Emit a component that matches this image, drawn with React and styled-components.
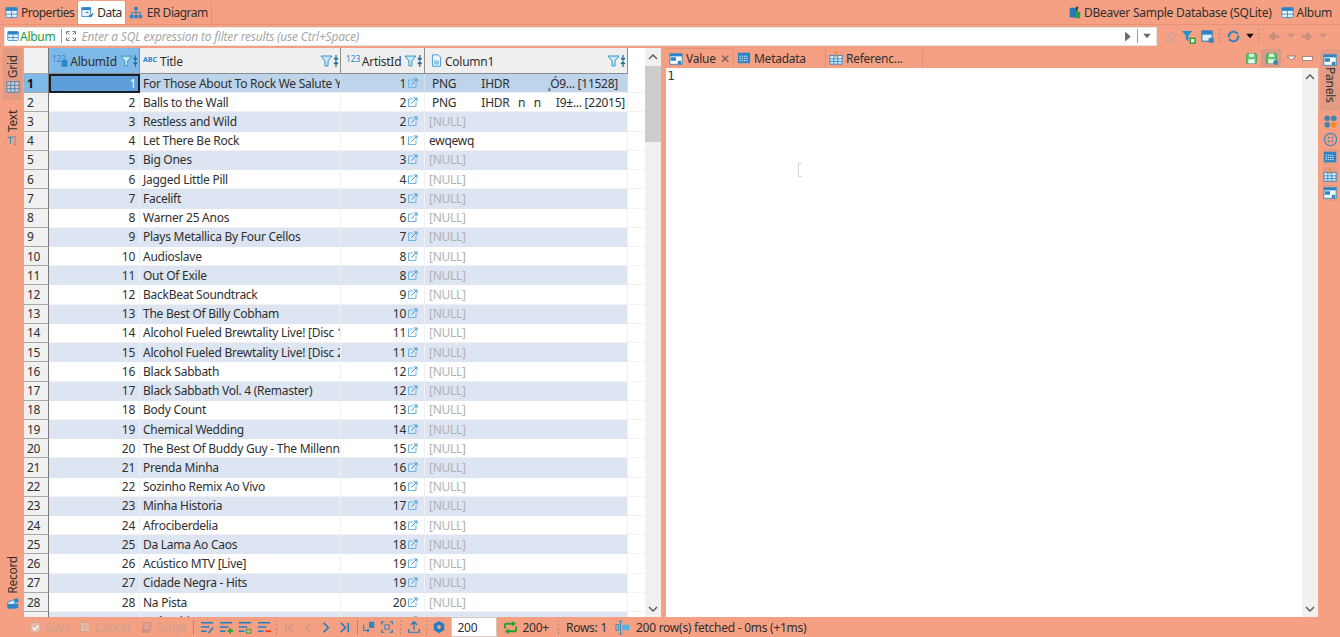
import styled, { createGlobalStyle } from "styled-components";

const Global = createGlobalStyle`
  html, body { margin: 0; padding: 0; background: #f6a083; overflow: hidden; }
  * { box-sizing: border-box; }
`;

const ORANGE = "#f6a083";
const TEXT = "#2f2f2f";

const Shell = styled.div`
  width: 1340px;
  height: 637px;
  background: ${ORANGE};
  display: flex;
  flex-direction: column;
  overflow: hidden;
  font-family: "Noto Sans", "Open Sans", sans-serif;
  font-size: 12px;
  letter-spacing: -0.26px;
  color: ${TEXT};
`;

/* top tabs */
const TopBar = styled.div`
  height: 25px;
  padding: 1px 8px 0 3px;
  display: flex;
  align-items: stretch;
  border-bottom: 1px solid #e3937a;
`;
const TopTab = styled.div`
  display: flex;
  align-items: center;
  gap: ${(p) => p.$gap || 3}px;
  padding: 0 3px 0 ${(p) => p.$left || 3}px;
  border-right: 1px solid #dc9278;
  letter-spacing: -0.5px;
  background: ${(p) => (p.$active ? "#fff" : "transparent")};
  border-radius: 2px 2px 0 0;
`;
const TopRight = styled.div`
  margin-left: auto;
  display: flex;
  align-items: center;
  gap: 3px;
`;
const ContextLabel = styled.span`
  margin-right: 6px;
`;

/* filter row */
const FilterRow = styled.div`
  height: 21px;
  padding: 1px 0 0 4px;
  display: flex;
  align-items: center;
`;
const FilterInput = styled.div`
  width: 1153px;
  height: 19px;
  background: #fff;
  display: flex;
  align-items: center;
  padding-left: 2px;
  border: 1px solid #e9e4e0;
`;
const TableName = styled.span`
  color: #1a9a3c;
  margin: 0 5px 0 1px;
`;
const VLine = styled.span`
  width: 1px;
  height: 14px;
  flex: none;
  background: ${(p) => p.$c || "#9a9a9a"};
  margin: ${(p) => p.$margin || "0 3px"};
`;
const Placeholder = styled.span`
  font-style: italic;
  color: #a7a7a7;
  margin-left: 4px;
  letter-spacing: -0.2px;
`;
const FilterEnd = styled.div`
  margin-left: auto;
  display: flex;
  align-items: center;
  padding-right: 3px;
`;
const FilterTools = styled.div`
  display: flex;
  align-items: center;
  margin-left: 6px;
`;
const Slot = styled.span`
  width: ${(p) => p.$w || 18}px;
  height: 18px;
  display: flex;
  align-items: center;
  justify-content: center;
  flex: none;
`;
const Dots = styled.span`
  width: 1px;
  height: 14px;
  margin: 0 ${(p) => p.$m || 5}px 0 ${(p) => p.$ml || p.$m || 5}px;
  flex: none;
  background: repeating-linear-gradient(#b98a78 0 2px, transparent 2px 4px);
`;

/* main area */
const Main = styled.div`
  flex: 1;
  min-height: 0;
  display: flex;
`;
const LeftRail = styled.div`
  width: 24px;
  flex: none;
  padding: 2px 2px 0 3px;
  display: flex;
  flex-direction: column;
`;
const SideTab = styled.div`
  display: flex;
  flex-direction: column;
  align-items: center;
  gap: 2px;
  height: ${(p) => p.$h}px;
  padding-top: ${(p) => p.$top || 0}px;
  background: ${(p) => (p.$active ? "#e39c84" : "transparent")};
  border: ${(p) => (p.$active ? "1px solid #dd9880" : "0")};
  border-radius: 2px;
  margin-top: ${(p) => (p.$end ? "auto" : "0")};
`;
const VerticalUp = styled.span`
  writing-mode: vertical-rl;
  transform: rotate(180deg);
  line-height: 16px;
`;
const VerticalDown = styled.span`
  writing-mode: vertical-rl;
  line-height: 16px;
`;

const GridPane = styled.div`
  width: 621px;
  flex: none;
  margin-top: 2px;
  background: #fff;
  display: flex;
  flex-direction: column;
  overflow: hidden;
`;
const Row = styled.div`
  height: ${(p) => (p.$head ? "26px" : "19.22px")};
  flex: none;
  display: flex;
`;
const Head = styled.div`
  width: ${(p) => p.$w}px;
  flex: none;
  display: flex;
  align-items: center;
  padding: 0 1px 0 ${(p) => p.$left || 3}px;
  gap: 2px;
  background: ${(p) => (p.$sel ? "#7fb9e9" : "#efefef")};
  border-right: 1px solid #8d8d8d;
  border-bottom: 1px solid #8d8d8d;
`;
const HeadName = styled.span`
  flex: 1;
  padding-top: 1px;
`;
const RowNum = styled.div`
  width: 25px;
  flex: none;
  display: flex;
  align-items: center;
  padding-left: 3px;
  background: ${(p) => (p.$sel ? "#7fb9e9" : "#f0f0f0")};
  font-weight: ${(p) => (p.$sel ? 700 : 400)};
  color: ${(p) => (p.$sel ? "#111" : TEXT)};
  border-right: 1px solid #777;
  border-bottom: 1px solid #a8a8a8;
`;
const Cell = styled.div`
  width: ${(p) => p.$w}px;
  flex: none;
  display: flex;
  align-items: center;
  justify-content: ${(p) => (p.$num ? "flex-end" : "flex-start")};
  padding: 0 ${(p) => p.$right || 0}px 0 ${(p) => p.$left || 3}px;
  overflow: hidden;
  white-space: pre;
  background: ${(p) => (p.$sel ? "#bdd4ea" : p.$alt ? "#dce5f1" : "#fff")};
  border-right: 1px solid ${(p) => (p.$sel ? "#cfe0f0" : "#eef1f5")};
  border-bottom: 1px solid ${(p) => (p.$alt ? "#dce5f1" : "#f1f1f1")};
`;
const FocusCell = styled(Cell)`
  background: #5f9fd9;
  color: #f3f8fc;
  border: 2px solid #16202c;
  padding-right: 2px;
`;
const LinkGap = styled.span`
  display: flex;
  margin-left: 1px;
`;
const Null = styled.span`
  color: #b2b2b2;
`;
const Blob = styled.span`
  display: flex;
  width: 100%;
  padding-left: 3px;
`;
const BlobTail = styled.span`
  margin-left: auto;
  margin-right: ${(p) => p.$right}px;
`;
const BlobMark = styled.span`
  width: ${(p) => p.$w}px;
  flex: none;
`;
const Filler = styled.div`
  flex: 1;
  border-bottom: 1px solid #f3f3f3;
`;

const ScrollBar = styled.div`
  width: 16px;
  flex: none;
  background: #f0f0f0;
  display: flex;
  flex-direction: column;
  align-items: center;
  justify-content: space-between;
  position: relative;
`;
const GridScroll = styled(ScrollBar)`
  margin-top: 2px;
`;
const Thumb = styled.div`
  position: absolute;
  top: 18px;
  left: 0;
  right: 0;
  height: 76px;
  background: #cdcdcd;
`;
const ScrollArrow = styled.span`
  height: 17px;
  display: flex;
  align-items: center;
  justify-content: center;
`;

const ValuePane = styled.div`
  width: 652px;
  flex: none;
  margin-left: 5px;
  display: flex;
  flex-direction: column;
`;
const ValueTabs = styled.div`
  height: 22px;
  padding-top: 2px;
  display: flex;
  align-items: stretch;
`;
const ValueTab = styled.div`
  width: ${(p) => p.$w}px;
  display: flex;
  align-items: center;
  gap: 3px;
  padding-left: 3px;
  border-right: 1px solid #dc9278;
  border-top: ${(p) => (p.$active ? "1px solid #e3937a" : "0")};
  border-radius: 3px 3px 0 0;
`;
const CloseMark = styled.span`
  margin-left: auto;
  margin-right: 3px;
  color: #6b5a53;
`;
const ValueTools = styled.div`
  margin-left: auto;
  display: flex;
  align-items: center;
  padding-right: 5px;
`;
const SaveSlot = styled(Slot)`
  background: ${(p) => (p.$on ? "#d89a88" : "transparent")};
  width: 20px;
`;
const ValueBody = styled.div`
  flex: 1;
  min-height: 0;
  background: #fff;
  display: flex;
  position: relative;
`;
const ValueText = styled.div`
  flex: 1;
  padding: 0 0 0 1px;
  font-family: "DejaVu Sans Mono", "Liberation Mono", monospace;
  font-size: 13px;
  line-height: 16px;
  letter-spacing: 0;
  color: #33424a;
`;
const MouseCaret = styled.span`
  position: absolute;
  left: 132px;
  top: 95px;
  width: 4px;
  height: 14px;
  border: 1px solid #d4d4d4;
  border-right: 0;
`;

const RightRail = styled.div`
  width: 22px;
  flex: none;
  padding: 3px 0 0 2px;
  display: flex;
  flex-direction: column;
  align-items: center;
  gap: 2px;
`;
const PanelsTab = styled.div`
  width: 20px;
  height: 62px;
  padding-top: 4px;
  background: #e39c84;
  border-radius: 2px;
  display: flex;
  flex-direction: column;
  align-items: center;
`;
const RailIcon = styled.span`
  width: 15px;
  height: 16px;
  flex: none;
  display: flex;
  align-items: center;
  justify-content: center;
  background: ${(p) => (p.$on ? "#e39c84" : "transparent")};
`;

/* bottom bar */
const BottomBar = styled.div`
  height: 20px;
  flex: none;
  display: flex;
  align-items: center;
  padding-left: 29px;
`;
const Action = styled.span`
  display: flex;
  align-items: center;
  gap: 3px;
  color: #cda18f;
  margin-right: ${(p) => p.$mr}px;
`;
const PageInput = styled.div`
  width: 46px;
  height: 20px;
  flex: none;
  background: #fff;
  border: 1px solid #d8c7bf;
  display: flex;
  align-items: center;
  padding-left: 6px;
  margin: 0 5px 0 3px;
`;
const Status = styled.span`
  display: flex;
  margin-left: ${(p) => p.$ml || 0}px;
`;

/* icons */
const Svg = ({ s = 13, children }) => (
  <svg width={s} height={s} viewBox="0 0 16 16" fill="none">
    {children}
  </svg>
);
const TableIcon = ({ s = 13 }) => (
  <Svg s={s}>
    <rect x="1" y="2" width="14" height="12" rx="1" fill="#e9f3fb" stroke="#2a86c8" />
    <rect x="1" y="2" width="14" height="4" fill="#2a86c8" />
    <path d="M8 6v8M1 10h14" stroke="#2a86c8" />
  </Svg>
);
const DataIcon = () => (
  <Svg>
    <rect x="1" y="2" width="11" height="11" fill="#e9f3fb" stroke="#2a86c8" />
    <rect x="1" y="2" width="11" height="3" fill="#2a86c8" />
    <path d="M10 11l2 2 3-4M6 8h3" stroke="#1d6fa8" strokeWidth="1.5" />
  </Svg>
);
const ErIcon = () => (
  <Svg s={14}>
    <rect x="6" y="1" width="4" height="4" fill="#2a86c8" />
    <rect x="1" y="10" width="4" height="4" fill="#2a86c8" />
    <rect x="6" y="10" width="4" height="4" fill="#2a86c8" />
    <rect x="11" y="10" width="4" height="4" fill="#2a86c8" />
    <path d="M8 5v5M3 10V7.5h10V10" stroke="#2a86c8" />
  </Svg>
);
const ExpandIcon = () => (
  <Svg s={12}>
    <path d="M2 6V2h4M14 6V2h-4M2 10v4h4M14 10v4h-4M3 3l3 3M13 3l-3 3M3 13l3-3M13 13l-3-3" stroke="#555" />
  </Svg>
);
const Arrow = ({ dir = "down", c = "#555" }) => {
  const pts = {
    down: "3,5 13,5 8,11",
    right: "5,2 12,8 5,14",
  };
  return (
    <Svg s={dir === "right" ? 13 : 12}>
      <polygon points={pts[dir]} fill={c} />
    </Svg>
  );
};
const Eraser = () => (
  <Svg s={15}>
    <path d="M2 10l6-7 5 4-6 7H4z" fill="#e0a592" stroke="#cf9f8d" />
    <path d="M9 14h5" stroke="#cf9f8d" />
  </Svg>
);
const FunnelPlus = () => (
  <Svg s={15}>
    <path d="M1 2h11L8 7v6L5 11V7z" fill="#1c94c9" />
    <rect x="10" y="10" width="5" height="5" fill="#fff" stroke="#2a9a3a" strokeWidth="1.5" />
  </Svg>
);
const SaveFilter = () => (
  <Svg s={15}>
    <rect x="2" y="2" width="11" height="11" fill="#dcecf8" stroke="#2a6fa8" />
    <rect x="2" y="2" width="11" height="4" fill="#2a86c8" />
    <circle cx="12" cy="12" r="3" fill="#3d86b8" />
  </Svg>
);
const RefreshBlue = () => (
  <Svg s={15}>
    <path d="M3 9a5 5 0 0 1 8-5l2 1M13 7a5 5 0 0 1-8 5L3 11" stroke="#2a7fc0" strokeWidth="2" />
  </Svg>
);
const Side = ({ flip }) => (
  <Svg s={15}>
    <path
      d={flip ? "M2 8h8M7 4l4 4-4 4" : "M14 8H6M9 4L5 8l4 4"}
      stroke="#c98f7c"
      strokeWidth="3"
    />
  </Svg>
);
const TinyFunnel = () => (
  <svg width="20" height="14" viewBox="0 0 20 14" fill="none">
    <path d="M2 2h11L9 7v5H6V7z" fill="#cfe6f4" stroke="#2b97c9" />
    <path d="M17 1v5M15 4l2 2 2-2" stroke="#2a6d96" strokeWidth="1.3" />
    <path d="M17 13V8M15 10l2-2 2 2" stroke="#2a6d96" strokeWidth="1.3" />
  </svg>
);
const TypeNum = ({ overlay }) => (
  <svg width={overlay ? 17 : 14} height="14" viewBox={overlay ? "0 0 17 14" : "0 0 14 14"}>
    <text x="0" y="8" fontSize="8.5" letterSpacing="0" fontFamily="Noto Sans, sans-serif" fill="#2a86c8">123</text>
    {overlay && <rect x="10" y="6" width="6" height="7" fill="#2a86c8" />}
  </svg>
);
const TypeAbc = () => (
  <svg width="15" height="12" viewBox="0 0 15 12">
    <text x="0" y="7" fontSize="7" fontWeight="700" letterSpacing="0" fontFamily="Noto Sans, sans-serif" fill="#2a86c8">ABC</text>
  </svg>
);
const DocIcon = () => (
  <Svg>
    <path d="M3 1h7l3 3v11H3z" fill="#eef6fb" stroke="#2a86c8" />
    <path d="M5 8h6v5H5z" fill="#8cc3e6" />
  </Svg>
);
const LinkIcon = () => (
  <svg width="11" height="11" viewBox="0 0 11 11" fill="none">
    <path d="M6 2H1.5v7.5H9V5" stroke="#6bb5e2" />
    <path d="M4.5 6.5L9.5 1.5M6.8 1h3.2v3.2" stroke="#3a94d0" />
  </svg>
);
const SaveGreen = ({ dot }) => (
  <Svg>
    <rect x="2" y="2" width="12" height="12" rx="1" fill="#5fc97a" stroke="#2e9a4c" />
    <rect x="5" y="2" width="6" height="4" fill="#dff5e5" />
    <rect x="4" y="9" width="8" height="5" fill="#e9f8ed" />
    {dot && <circle cx="13" cy="13" r="3" fill="#3d86b8" />}
  </Svg>
);
const Minimize = () => (
  <svg width="11" height="5" viewBox="0 0 11 5">
    <rect x="0.5" y="0.5" width="10" height="4" fill="#fff" stroke="#a98a7e" />
  </svg>
);
const ViewMenu = () => (
  <svg width="11" height="6" viewBox="0 0 11 6">
    <path d="M1 1h9L5.5 5z" fill="#fff" stroke="#9a7a6e" />
  </svg>
);
const DbIcon = () => (
  <Svg>
    <rect x="2" y="2" width="10" height="12" rx="1" fill="#2f78b8" />
    <rect x="9" y="7" width="6" height="8" fill="#27a04a" />
    <path d="M10 1l3 0-3 6z" fill="#233" />
  </Svg>
);
const SmallGrid = () => (
  <Svg s={14}>
    <rect x="1" y="2" width="14" height="12" fill="#f2c1ad" stroke="#2a86c8" />
    <path d="M5.5 2v12M10 2v12M1 6h14M1 10h14" stroke="#2a86c8" />
  </Svg>
);
const TextGlyph = () => (
  <Svg s={13}>
    <path d="M2 4h7M5.5 4v8" stroke="#2a86c8" strokeWidth="1.4" />
    <path d="M11 3v10M9.5 3h3M9.5 13h3" stroke="#888" />
  </Svg>
);
const RecordGlyph = () => (
  <Svg s={14}>
    <path d="M2 7l8-3v10H2z" fill="#dff0fa" stroke="#2a86c8" />
    <rect x="2" y="9" width="12" height="5" fill="#2a86c8" />
    <circle cx="12" cy="5" r="2.5" fill="#2a86c8" />
  </Svg>
);
const ValueIcon = () => (
  <Svg s={14}>
    <rect x="1" y="2" width="14" height="12" fill="#fff" stroke="#2a86c8" />
    <rect x="1" y="2" width="14" height="3" fill="#2a86c8" />
    <rect x="2" y="6" width="6" height="4" fill="#2a86c8" />
    <rect x="10" y="10" width="4" height="4" fill="#3d86b8" />
  </Svg>
);
const MetaIcon = () => (
  <Svg s={14}>
    <rect x="1" y="2" width="14" height="12" fill="#2a86c8" />
    <path d="M3 6h10M3 8.5h10M3 11h10" stroke="#fff" strokeDasharray="1.5 1" />
  </Svg>
);
const RefIcon = () => (
  <Svg s={14}>
    <rect x="1" y="5" width="14" height="10" fill="#dcecf8" stroke="#2a86c8" />
    <path d="M5.5 5v10M10 5v10M1 9h14M1 12h14" stroke="#2a86c8" />
    <path d="M8 0v7" stroke="#ef8a1f" strokeWidth="1.6" />
  </Svg>
);
const FourDots = () => (
  <Svg s={15}>
    <circle cx="4.5" cy="4.5" r="3" fill="#3d86b8" />
    <circle cx="11.5" cy="4.5" r="3" fill="#3d86b8" />
    <circle cx="4.5" cy="11.5" r="3" fill="#3d86b8" />
    <circle cx="11.5" cy="11.5" r="3" fill="#ef8a1f" />
  </Svg>
);
const RoundDots = () => (
  <Svg s={15}>
    <circle cx="8" cy="8" r="6.5" stroke="#3d86b8" strokeWidth="1.3" />
    <path d="M5.5 5.5h1v1h-1zM9.5 5.5h1v1h-1zM5.5 9.5h1v1h-1zM9.5 9.5h1v1h-1z" fill="#3d86b8" stroke="#3d86b8" />
  </Svg>
);
const SaveCheck = () => (
  <Svg s={13}>
    <circle cx="8" cy="8" r="6.5" fill="#e6bcab" stroke="#c9a493" />
    <path d="M4.5 8l2.5 2.5L11.5 6" stroke="#fff" strokeWidth="1.6" />
  </Svg>
);
const CancelBox = () => (
  <Svg s={12}>
    <rect x="2" y="2" width="12" height="12" fill="#eab9a6" stroke="#c9a493" />
    <path d="M5 5l6 6M11 5l-6 6" stroke="#c9a493" />
  </Svg>
);
const ScriptIcon = () => (
  <Svg s={13}>
    <path d="M4 2h9v10H4zM2 12h9v2H2z" fill="#d69c89" stroke="#c9917f" />
    <path d="M6 5h5M6 8h5" stroke="#eec0ae" />
  </Svg>
);
const Lines = ({ mark }) => (
  <Svg s={15}>
    <path d="M1 3h13M1 7.5h9M1 12h6" stroke="#1f7fc2" strokeWidth="1.6" />
    {mark === "edit" && <path d="M9 14l5-6" stroke="#1f7fc2" strokeWidth="1.6" />}
    {mark === "add" && <path d="M9 11.5h6M12 8.5v6" stroke="#21a03a" strokeWidth="1.8" />}
    {mark === "dup" && <path d="M9 10h5v4H9z" stroke="#21a03a" />}
    {mark === "del" && <path d="M9 12h6" stroke="#e2402c" strokeWidth="1.8" />}
  </Svg>
);
const Pager = ({ d, bar, c }) => (
  <Svg s={15}>
    <path d={d} stroke={c} strokeWidth="1.7" />
    {bar && <path d={bar} stroke={c} strokeWidth="1.7" />}
  </Svg>
);
const LinkedCols = () => (
  <Svg s={14}>
    <path d="M2 5v7h6M6 10l2 2-2 2" stroke="#1f7fc2" strokeWidth="1.2" />
    <rect x="8" y="2" width="6" height="7" fill="#2a86c8" />
  </Svg>
);
const Focus = () => (
  <Svg s={14}>
    <path d="M2 5V2h3M11 2h3v3M2 11v3h3M14 11v3h-3" stroke="#1f7fc2" strokeWidth="1.4" />
    <rect x="5.5" y="5.5" width="5" height="5" stroke="#1f7fc2" />
  </Svg>
);
const Upload = () => (
  <Svg s={14}>
    <path d="M2 10v4h12v-4" stroke="#1f7fc2" strokeWidth="1.4" />
    <path d="M8 11V2M4.5 5.5L8 2l3.5 3.5" stroke="#1f7fc2" strokeWidth="1.6" />
  </Svg>
);
const Gear = () => (
  <Svg s={14}>
    <polygon points="8,1 14,4.5 14,11.5 8,15 2,11.5 2,4.5" fill="#1f7fc2" />
    <circle cx="8" cy="8" r="2.2" fill="#f6a083" />
  </Svg>
);
const GreenLoop = () => (
  <Svg s={15}>
    <path d="M2 9V6a2 2 0 0 1 2-2h8M14 7v3a2 2 0 0 1-2 2H4" stroke="#1ea02f" strokeWidth="2" />
    <path d="M10 1l4 3-4 3zM6 9l-4 3 4 3z" fill="#1ea02f" />
  </Svg>
);
const FetchIcon = () => (
  <Svg s={15}>
    <path d="M4 1h4M4 15h4M6 1v14" stroke="#1f8fc9" />
    <rect x="8" y="5" width="7" height="6" fill="#4db3e2" />
    <rect x="1" y="5" width="3" height="6" stroke="#1f8fc9" />
  </Svg>
);
const Chevron = ({ up }) => (
  <svg width="10" height="6" viewBox="0 0 10 6" fill="none">
    <path d={up ? "M1 5l4-4 4 4" : "M1 1l4 4 4-4"} stroke="#606060" strokeWidth="1.5" />
  </svg>
);

const COLS = { album: 91, title: 201, artist: 84, col: 203 };

const ALBUMS = [
  ["For Those About To Rock We Salute You", 1],
  ["Balls to the Wall", 2],
  ["Restless and Wild", 2],
  ["Let There Be Rock", 1],
  ["Big Ones", 3],
  ["Jagged Little Pill", 4],
  ["Facelift", 5],
  ["Warner 25 Anos", 6],
  ["Plays Metallica By Four Cellos", 7],
  ["Audioslave", 8],
  ["Out Of Exile", 8],
  ["BackBeat Soundtrack", 9],
  ["The Best Of Billy Cobham", 10],
  ["Alcohol Fueled Brewtality Live! [Disc 1]", 11],
  ["Alcohol Fueled Brewtality Live! [Disc 2]", 11],
  ["Black Sabbath", 12],
  ["Black Sabbath Vol. 4 (Remaster)", 12],
  ["Body Count", 13],
  ["Chemical Wedding", 14],
  ["The Best Of Buddy Guy - The Millennium", 15],
  ["Prenda Minha", 16],
  ["Sozinho Remix Ao Vivo", 16],
  ["Minha Historia", 17],
  ["Afrociberdelia", 18],
  ["Da Lama Ao Caos", 18],
  ["Acústico MTV [Live]", 19],
  ["Cidade Negra - Hits", 19],
  ["Na Pista", 20],
  ["Axé Bahia 2001", 21],
];

const column1 = (i) => {
  if (i === 0)
    return (
      <Blob>
        PNG<BlobMark $w={25} />IHDR<BlobTail $right={9}>¸Ó9... [11528]</BlobTail>
      </Blob>
    );
  if (i === 1)
    return (
      <Blob>
        PNG<BlobMark $w={25} />IHDR   n   n<BlobTail $right={2}>I9±... [22015]</BlobTail>
      </Blob>
    );
  if (i === 3) return "ewqewq";
  return <Null>[NULL]</Null>;
};

export default function App() {
  return (
    <Shell>
      <Global />
      <TopBar>
        <TopTab $left={2}><TableIcon />Properties</TopTab>
        <TopTab $active><DataIcon />Data</TopTab>
        <TopTab $gap={4}><ErIcon />ER Diagram</TopTab>
        <TopRight>
          <DbIcon />
          <ContextLabel>DBeaver Sample Database (SQLite)</ContextLabel>
          <TableIcon />
          <span>Album</span>
        </TopRight>
      </TopBar>

      <FilterRow>
        <FilterInput>
          <TableIcon s={12} />
          <TableName>Album</TableName>
          <VLine $margin="0 3px 0 1px" />
          <ExpandIcon />
          <Placeholder>Enter a SQL expression to filter results (use Ctrl+Space)</Placeholder>
          <FilterEnd>
            <Arrow dir="right" c="#6b6b6b" />
            <VLine $margin="0 3px 0 3px" />
            <Arrow c="#6b6b6b" />
          </FilterEnd>
        </FilterInput>
        <FilterTools>
          <Slot $w={17}><Eraser /></Slot>
          <Slot $w={17}><FunnelPlus /></Slot>
          <Slot $w={20}><SaveFilter /></Slot>
          <Dots $m={2} />
          <Slot $w={22}><RefreshBlue /></Slot>
          <Slot $w={12}><Arrow c="#111" /></Slot>
          <Dots $m={2} />
          <Slot $w={24}><Side /></Slot>
          <Slot $w={12}><Arrow c="#c98f7c" /></Slot>
          <Slot $w={20}><Side flip /></Slot>
          <Slot $w={12}><Arrow c="#c98f7c" /></Slot>
        </FilterTools>
      </FilterRow>

      <Main>
        <LeftRail>
          <SideTab $active $h={52} $top={6}>
            <VerticalUp>Grid</VerticalUp>
            <SmallGrid />
          </SideTab>
          <SideTab $h={50} $top={10}>
            <VerticalUp>Text</VerticalUp>
            <TextGlyph />
          </SideTab>
          <SideTab $end $h={61}>
            <VerticalUp>Record</VerticalUp>
            <RecordGlyph />
          </SideTab>
        </LeftRail>

        <GridPane>
          <Row $head>
            <RowNum />
            <Head $w={COLS.album} $sel>
              <TypeNum overlay />
              <HeadName>AlbumId</HeadName>
              <TinyFunnel />
            </Head>
            <Head $w={COLS.title}>
              <TypeAbc />
              <HeadName>Title</HeadName>
              <TinyFunnel />
            </Head>
            <Head $w={COLS.artist} $left={5}>
              <TypeNum />
              <HeadName>ArtistId</HeadName>
              <TinyFunnel />
            </Head>
            <Head $w={COLS.col} $left={5}>
              <DocIcon />
              <HeadName>Column1</HeadName>
              <TinyFunnel />
            </Head>
          </Row>
          {ALBUMS.map(([title, artist], i) => {
            const sel = i === 0;
            const alt = i > 1 && i % 2 === 0;
            const IdCell = sel ? FocusCell : Cell;
            return (
              <Row key={i}>
                <RowNum $sel={sel}>{i + 1}</RowNum>
                <IdCell $w={COLS.album} $num $right={4} $alt={alt}>{i + 1}</IdCell>
                <Cell $w={COLS.title} $sel={sel} $alt={alt}>{title}</Cell>
                <Cell $w={COLS.artist} $num $right={6} $sel={sel} $alt={alt}>
                  {artist}
                  <LinkGap><LinkIcon /></LinkGap>
                </Cell>
                <Cell $w={COLS.col} $left={4} $sel={sel} $alt={alt}>{column1(i)}</Cell>
                <Filler />
              </Row>
            );
          })}
        </GridPane>
        <GridScroll>
          <ScrollArrow><Chevron up /></ScrollArrow>
          <Thumb />
          <ScrollArrow><Chevron /></ScrollArrow>
        </GridScroll>

        <ValuePane>
          <ValueTabs>
            <ValueTab $w={68} $active>
              <ValueIcon />Value<CloseMark>✕</CloseMark>
            </ValueTab>
            <ValueTab $w={92}><MetaIcon />Metadata</ValueTab>
            <ValueTab $w={97}><RefIcon />Referenc...</ValueTab>
            <ValueTools>
              <SaveSlot><SaveGreen /></SaveSlot>
              <SaveSlot $on><SaveGreen dot /></SaveSlot>
              <Slot $w={20}><ViewMenu /></Slot>
              <Slot $w={12}><Minimize /></Slot>
            </ValueTools>
          </ValueTabs>
          <ValueBody>
            <ValueText>1</ValueText>
            <MouseCaret />
            <ScrollBar>
              <ScrollArrow><Chevron up /></ScrollArrow>
              <ScrollArrow><Chevron /></ScrollArrow>
            </ScrollBar>
          </ValueBody>
        </ValuePane>

        <RightRail>
          <PanelsTab>
            <ValueIcon />
            <VerticalDown>Panels</VerticalDown>
          </PanelsTab>
          <RailIcon><FourDots /></RailIcon>
          <RailIcon><RoundDots /></RailIcon>
          <RailIcon $on><MetaIcon /></RailIcon>
          <RailIcon $on><RefIcon /></RailIcon>
          <RailIcon $on><ValueIcon /></RailIcon>
        </RightRail>
      </Main>

      <BottomBar>
        <Action $mr={9}><SaveCheck />Save</Action>
        <Action $mr={10}><CancelBox />Cancel</Action>
        <Action $mr={2}><ScriptIcon />Script</Action>
        <VLine $c="#a98a7e" $margin="0 4px" />
        <Slot $w={19}><Lines mark="edit" /></Slot>
        <Slot $w={19}><Lines mark="add" /></Slot>
        <Slot $w={19}><Lines mark="dup" /></Slot>
        <Slot $w={19}><Lines mark="del" /></Slot>
        <Dots $m={2} />
        <Slot $w={19}><Pager d="M13 3L8 8l5 5" bar="M5 3v10" c="#cf9b88" /></Slot>
        <Slot $w={19}><Pager d="M11 3L6 8l5 5" c="#cf9b88" /></Slot>
        <Slot $w={19}><Pager d="M5 3l5 5-5 5" c="#1f7fc2" /></Slot>
        <Slot $w={19}><Pager d="M3 3l5 5-5 5" bar="M11 3v10" c="#1f7fc2" /></Slot>
        <VLine $c="#a98a7e" $margin="0 2px" />
        <Slot><LinkedCols /></Slot>
        <Slot><Focus /></Slot>
        <Dots $m={4} />
        <Slot><Upload /></Slot>
        <Dots $m={3} />
        <Slot><Gear /></Slot>
        <PageInput>200</PageInput>
        <Slot><GreenLoop /></Slot>
        <Status $ml={3}>200+</Status>
        <Dots $ml={9} $m={7} />
        <Status>Rows: 1</Status>
        <Status $ml={7}><Slot><FetchIcon /></Slot></Status>
        <Status $ml={4}>200 row(s) fetched - 0ms (+1ms)</Status>
      </BottomBar>
    </Shell>
  );
}
